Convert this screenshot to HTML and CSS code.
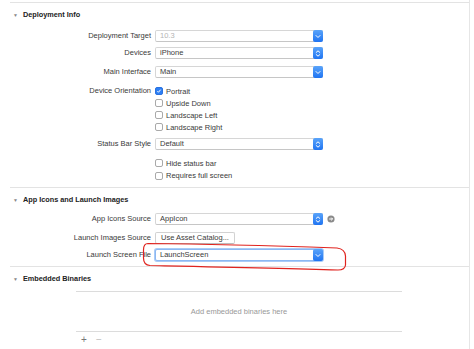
FILE: index.html
```html
<!DOCTYPE html>
<html>
  <head>
    <meta charset="UTF-8">
    <title>General</title>
    <link rel="stylesheet" href="styles.css">
  </head>
  <body>
    <div class="page">
      <!-- Deployment Info -->
      <div class="section">
        <div class="section-head"><span class="tri">▼</span>Deployment Info</div>
        <div class="row r-first">
          <div class="label">Deployment Target</div>
          <div class="field combo"><span class="value dim">10.3</span><span class="btn"><svg viewBox="0 0 10 11"><path d="M3 4.5 L5 6.5 L7 4.5" /></svg></span></div>
        </div>
        <div class="row r-tight">
          <div class="label">Devices</div>
          <div class="field"><span class="value">iPhone</span><span class="btn"><svg viewBox="0 0 10 11"><path d="M3.2 4.4 L5 2.8 L6.8 4.4 M3.2 6.6 L5 8.2 L6.8 6.6" /></svg></span></div>
        </div>
        <div class="row">
          <div class="label">Main Interface</div>
          <div class="field combo"><span class="value">Main</span><span class="btn"><svg viewBox="0 0 10 11"><path d="M3 4.5 L5 6.5 L7 4.5" /></svg></span></div>
        </div>
        <div class="row">
          <div class="label">Device Orientation</div>
          <div class="checks">
            <div class="check"><span class="box on"><svg viewBox="0 0 8 8"><path d="M1.8 4.2 L3.3 5.7 L6.2 2.2" /></svg></span>Portrait</div>
            <div class="check"><span class="box"></span>Upside Down</div>
            <div class="check"><span class="box"></span>Landscape Left</div>
            <div class="check"><span class="box"></span>Landscape Right</div>
          </div>
        </div>
        <div class="row r-tight">
          <div class="label">Status Bar Style</div>
          <div class="field"><span class="value">Default</span><span class="btn"><svg viewBox="0 0 10 11"><path d="M3.2 4.4 L5 2.8 L6.8 4.4 M3.2 6.6 L5 8.2 L6.8 6.6" /></svg></span></div>
        </div>
        <div class="row">
          <div class="label"></div>
          <div class="checks">
            <div class="check"><span class="box"></span>Hide status bar</div>
            <div class="check tall"><span class="box"></span>Requires full screen</div>
          </div>
        </div>
      </div>

      <!-- App Icons and Launch Images -->
      <div class="section">
        <div class="section-head"><span class="tri">▼</span>App Icons and Launch Images</div>
        <div class="row">
          <div class="label">App Icons Source</div>
          <div class="field"><span class="value">AppIcon</span><span class="btn"><svg viewBox="0 0 10 11"><path d="M3.2 4.4 L5 2.8 L6.8 4.4 M3.2 6.6 L5 8.2 L6.8 6.6" /></svg></span></div>
          <svg class="goto" viewBox="0 0 8 8"><circle cx="4" cy="4" r="3.6" /><path d="M2.2 4 H5.6 M4.2 2.6 L5.6 4 L4.2 5.4" /></svg>
        </div>
        <div class="row">
          <div class="label">Launch Images Source</div>
          <div class="push">Use Asset Catalog...</div>
        </div>
        <div class="row r-tight">
          <div class="label">Launch Screen File</div>
          <div class="field combo focus"><span class="value">LaunchScreen</span><span class="btn"><svg viewBox="0 0 10 11"><path d="M3 4.5 L5 6.5 L7 4.5" /></svg></span></div>
        </div>
      </div>

      <!-- Embedded Binaries -->
      <div class="section last">
        <div class="section-head"><span class="tri">▼</span>Embedded Binaries</div>
        <div class="drop">Add embedded binaries here</div>
        <div class="tools"><span class="plus">+</span><span class="minus">−</span></div>
      </div>
    </div>

    <!-- red hand-drawn mark -->
    <svg class="mark" width="474" height="349" viewBox="0 0 474 349">
      <path d="M148 243.5 C210 244 280 246 337 248 Q345 249 345.5 256 L345.5 265 Q345 270 338 270 C280 268 200 266.5 150 265.5 Q143.5 265 143.5 258 L143.5 250 Q143.5 243.5 148 243.5 Z" />
    </svg>
  </body>
</html>
```

FILE: styles.css
```css
/* base */
html,body{margin:0;padding:0;background:#fff;}
body{font-family:'Liberation Sans',Arial,sans-serif;font-size:7.5px;color:#3a3a3a;position:relative;width:474px;height:349px;overflow:hidden;}

/* page column with right edge */
.page{width:470px;height:349px;border-right:1px solid #e6e6e6;box-sizing:border-box;padding-top:2px;}
.section{margin-left:10px;border-top:1px solid #e3e3e3;padding-bottom:5px;}
.section.last{padding-bottom:0;}
.section-head{height:12px;line-height:12px;margin-top:6px;font-weight:bold;color:#222;font-size:7.3px;}
.tri{display:inline-block;width:13px;padding-left:3px;box-sizing:border-box;font-size:5px;color:#888;vertical-align:top;}

/* form rows */
.row{display:flex;align-items:flex-start;margin-top:7px;}
.row.r-first{margin-top:9px;}
.row.r-tight{margin-top:5px;}
.label{width:141px;text-align:right;padding-right:4px;height:12px;line-height:12px;flex:none;}

.field{position:relative;width:168px;height:12px;box-sizing:border-box;border:1px solid #d6d6d6;border-bottom-color:#c6c6c6;border-radius:2px;background:#fff;display:flex;align-items:center;}
.field .value{padding-left:4px;line-height:10px;}
.field .value.dim{color:#b4b4b4;}
.field.focus{border-color:#8cb8f2;box-shadow:0 0 0 1px #a9cbf7;}
.btn{position:absolute;right:-1px;top:-1px;width:10px;height:12px;border-radius:2px;background:linear-gradient(#5aa4fa,#1f74f2);}
.btn svg{display:block;width:10px;height:11px;margin-top:0.5px;}
.btn path{fill:none;stroke:#fff;stroke-width:1;stroke-linecap:round;stroke-linejoin:round;}

.goto{width:8px;height:8px;margin:2px 0 0 4px;}
.goto circle{fill:#8a8a8a;}
.goto path{fill:none;stroke:#fff;stroke-width:1;}

.push{height:12px;line-height:10px;box-sizing:border-box;border:1px solid #d2d2d2;border-bottom-color:#bdbdbd;border-radius:2px;padding:0 5px;background:#fff;}

/* checkboxes */
.checks{display:flex;flex-direction:column;}
.check{height:12px;display:flex;align-items:center;}
.check.tall{height:13px;}
.box{width:8px;height:8px;box-sizing:border-box;border:1px solid #a9a9a9;border-radius:2px;margin-right:3px;background:#fff;}
.box.on{background:#2d7ff4;border-color:#2a72e0;}
.box svg{display:block;width:6px;height:6px;}
.box path{fill:none;stroke:#fff;stroke-width:1.3;}

/* embedded binaries */
.drop{margin:6px 0 0 66px;width:326px;height:41px;border-top:1px solid #dcdcdc;border-bottom:1px solid #dcdcdc;box-sizing:border-box;display:flex;align-items:center;justify-content:center;color:#999;}
.tools{margin-left:71px;height:14px;display:flex;align-items:center;color:#777;font-size:10px;}
.plus{width:15px;}
.minus{color:#bbb;}

/* annotation */
.mark{position:absolute;left:0;top:0;pointer-events:none;}
.mark path{fill:none;stroke:#e0231e;stroke-width:1.2;}
```
